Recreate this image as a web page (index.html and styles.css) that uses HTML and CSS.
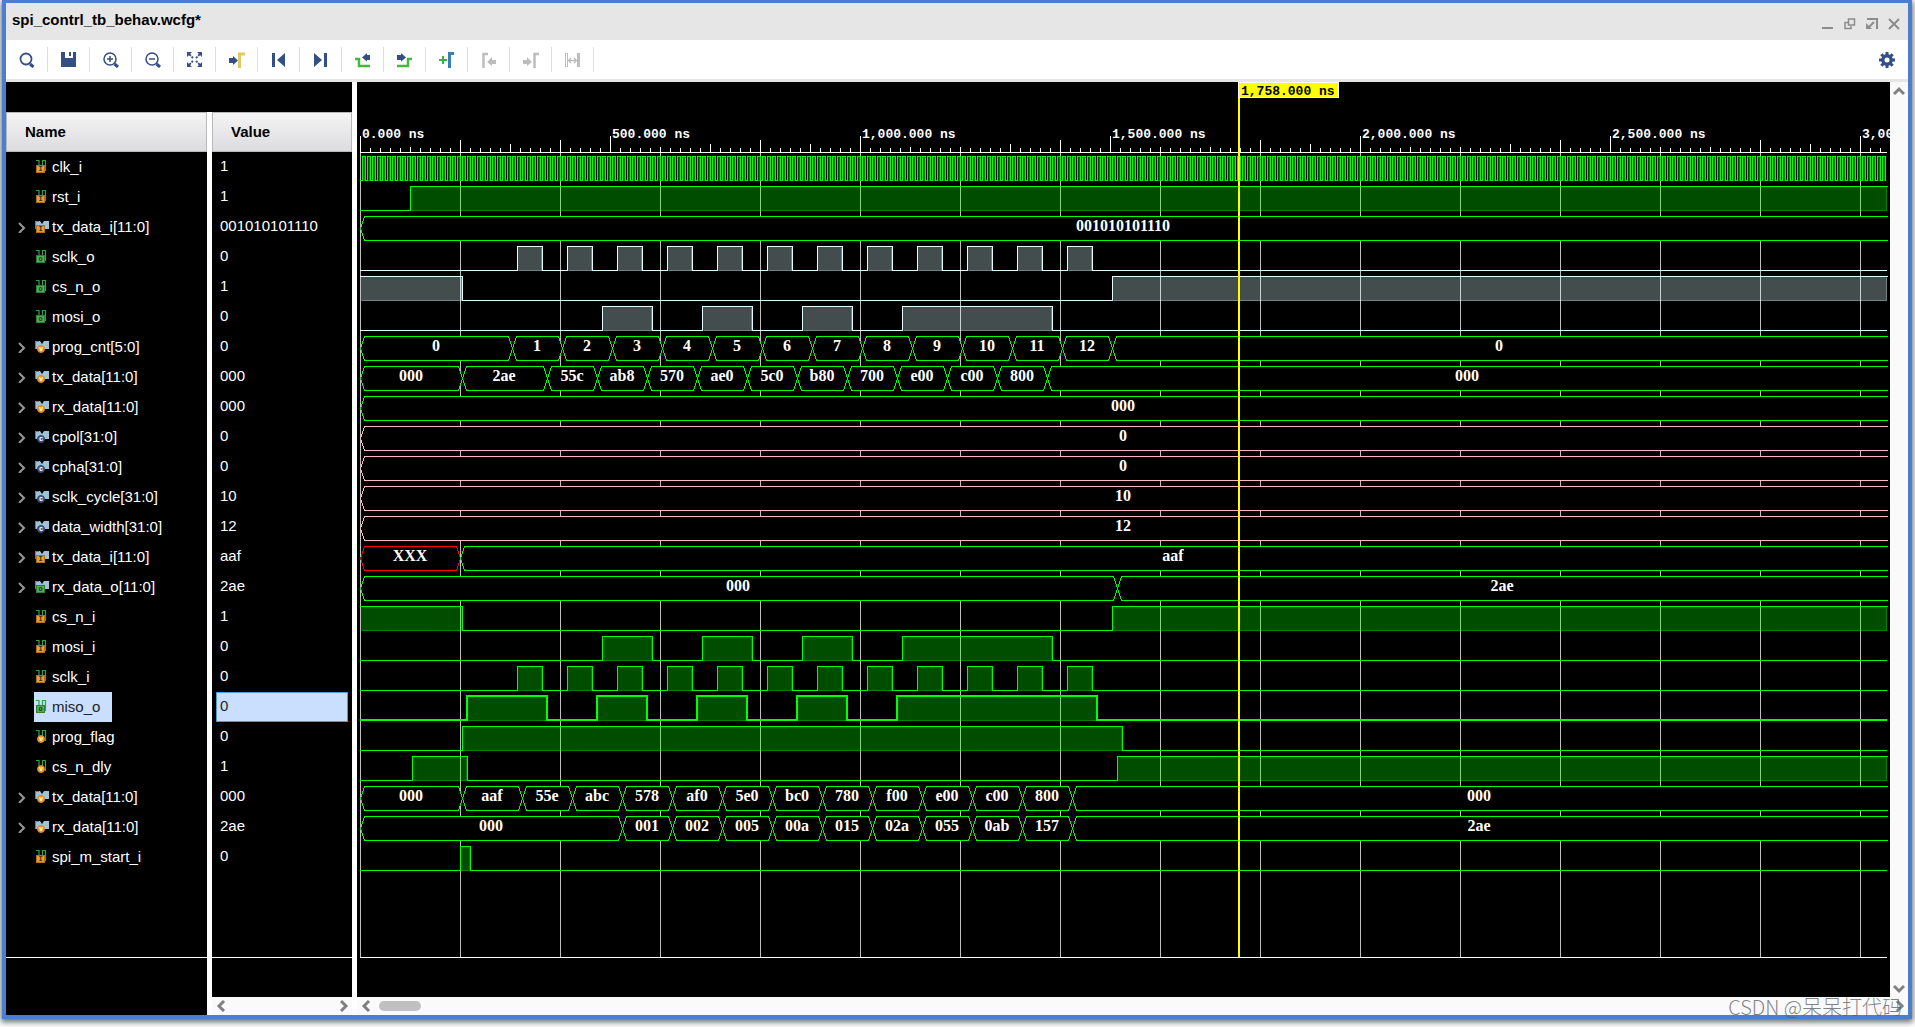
FILE: index.html
```html
<!DOCTYPE html>
<html lang="en">
<head>
  <meta charset="UTF-8" />
  <meta name="viewport" content="width=device-width, initial-scale=1.0"/>
  <title>spi_contrl_tb_behav.wcfg*</title>
  <link rel="stylesheet" href="styles.css">
</head>
<body>
  <main class="window">
    <header class="titlebar">
      <h1>spi_contrl_tb_behav.wcfg*</h1>
      <div class="window-controls">
        <button aria-label="Minimize"><svg viewBox="0 0 12 12"><path d="M0 10h11" stroke-width="2"/></svg></button>
        <button aria-label="Restore"><svg viewBox="0 0 12 12"><path d="M4.500 1h6v6h-6zM4 4.500H1v6h6V8" stroke-width="1.500"/></svg></button>
        <button aria-label="Float"><svg viewBox="0 0 12 12"><path d="M1 1h10v10M8 4L3 9" stroke-width="2"/><path d="M0 5v6h6z" fill="#8c8c8c" stroke="none"/></svg></button>
        <button aria-label="Close"><svg viewBox="0 0 12 12"><path d="M1 1l10 10M11 1L1 11" stroke-width="2"/></svg></button>
      </div>
    </header>

    <div class="toolbar">
      <button aria-label="Find"><svg viewBox="0 0 16 16"><circle cx="7" cy="7" r="5.500" fill="none" stroke="#344f86" stroke-width="1.800"/><path d="M11 12l3.500 3" stroke="#344f86" stroke-width="3"/></svg></button>
      <button aria-label="Save"><svg viewBox="0 0 16 16"><path d="M0 0h4v6h8V0h3v15H0z" fill="#344f86"/><path d="M8 0h2v4H8z" fill="#344f86"/></svg></button>
      <button aria-label="Zoom in"><svg viewBox="0 0 16 16"><circle cx="7" cy="7" r="6" fill="none" stroke="#344f86" stroke-width="1.500"/><path d="M4 7h6M7 4v6" stroke="#344f86" stroke-width="1.500"/><path d="M11.500 12l3.500 3" stroke="#344f86" stroke-width="3"/></svg></button>
      <button aria-label="Zoom out"><svg viewBox="0 0 16 16"><circle cx="7" cy="7" r="6" fill="none" stroke="#344f86" stroke-width="1.500"/><path d="M4 7h6" stroke="#344f86" stroke-width="1.500"/><path d="M11.500 12l3.500 3" stroke="#344f86" stroke-width="3"/></svg></button>
      <button aria-label="Zoom fit"><svg viewBox="0 0 16 16"><path d="M0 0h5L0 5zM10 0h5v5zM0 10v5h5zM15 10v5h-5z" fill="#344f86"/><path d="M1 1l5 5M14 1L9 6M1 14l5-5M14 14L9 9" stroke="#344f86" stroke-width="1.800" stroke-dasharray="4 1 3"/></svg></button>
      <button aria-label="Go to cursor"><svg viewBox="0 0 16 16"><path d="M0 6h4V4l5 4.500L4 13v-2H0z" fill="#344f86"/><path d="M10.500 16V2H16" fill="none" stroke="#e0c862" stroke-width="3"/></svg></button>
      <button aria-label="Go to start"><svg viewBox="0 0 16 16"><path d="M1 1h3v14H1zM14 1v14L6 8z" fill="#344f86"/></svg></button>
      <button aria-label="Go to end"><svg viewBox="0 0 16 16"><path d="M11 1h3v14h-3zM1 1v14l8-7z" fill="#344f86"/></svg></button>
      <button aria-label="Previous transition"><svg viewBox="0 0 16 16"><path d="M0 7h4v7h11" fill="none" stroke="#45b83f" stroke-width="2.500"/><path d="M15 3h-3V1L7 5.500l5 4V8h3z" fill="#344f86"/></svg></button>
      <button aria-label="Next transition"><svg viewBox="0 0 16 16"><path d="M0 14h11V7h4" fill="none" stroke="#45b83f" stroke-width="2.500"/><path d="M0 3h4V1l5 4.500-5 4V8H0z" fill="#344f86"/></svg></button>
      <button aria-label="Add marker"><svg viewBox="0 0 16 16"><path d="M0 8h8M4 4v8" stroke="#3fae46" stroke-width="2"/><path d="M10.500 16V1.500H15" fill="none" stroke="#3580b5" stroke-width="3"/></svg></button>
      <button aria-label="Previous marker" disabled><svg viewBox="0 0 16 16"><path d="M2.500 16V2H7" fill="none" stroke="#bdbdbd" stroke-width="2.500"/><path d="M15 8h-4V5L6 10l5 4v-2h4z" fill="#bdbdbd"/></svg></button>
      <button aria-label="Next marker" disabled><svg viewBox="0 0 16 16"><path d="M11.500 16V2H16" fill="none" stroke="#bdbdbd" stroke-width="2.500"/><path d="M0 8h4V5l5 5-5 4v-2H0z" fill="#bdbdbd"/></svg></button>
      <button aria-label="Swap cursors" disabled><svg viewBox="0 0 16 16"><path d="M.5 1.500h2v13h-2z" fill="none" stroke="#bdbdbd"/><path d="M12 1h3v14h-3z" fill="#bdbdbd"/><path d="M4 8.500h7M6 6L3.500 8.500 6 11M9 6l2.500 2.500L9 11" fill="none" stroke="#bdbdbd" stroke-width="1.300"/></svg></button>
      <button class="settings" aria-label="Settings"><svg viewBox="0 0 16 16"><circle cx="8" cy="8" r="4.200" fill="none" stroke="#344f86" stroke-width="3.400"/><path d="M8 0v3M8 13v3M0 8h3M13 8h3M2.300 2.300l2 2M11.700 11.700l2 2M2.300 13.700l2-2M11.700 4.300l2-2" stroke="#344f86" stroke-width="3"/></svg></button>
    </div>

    <div class="viewer">
      <section class="signals">
        <div class="name-pane">
          <table>
            <thead><tr><th>Name</th></tr></thead>
            <tbody id="names"></tbody>
          </table>
          <div class="rest"></div>
          <div class="foot"></div>
        </div>
        <div class="value-pane">
          <table>
            <thead><tr><th>Value</th></tr></thead>
            <tbody id="values"></tbody>
          </table>
          <div class="rest"></div>
          <div class="foot"></div>
          <div class="scroll-x">
            <button aria-label="Scroll values left"><svg viewBox="0 0 12 12"><path d="M9 1L4 6l5 5"/></svg></button>
            <button aria-label="Scroll values right"><svg viewBox="0 0 12 12"><path d="M4 1l5 5-5 5"/></svg></button>
          </div>
        </div>
      </section>

      <section class="waves">
        <div class="wave-row">
          <div class="wave-area" id="waveArea">
            <svg id="wave" role="img" aria-label="Waveforms"></svg>
          </div>
          <div class="scroll-y">
            <button aria-label="Scroll up"><svg viewBox="0 0 12 12"><path d="M1 9l5-5 5 5"/></svg></button>
            <button aria-label="Scroll down"><svg viewBox="0 0 12 12"><path d="M1 4l5 5 5-5"/></svg></button>
          </div>
        </div>
        <div class="scroll-x">
          <button aria-label="Scroll left"><svg viewBox="0 0 12 12"><path d="M9 1L4 6l5 5"/></svg></button>
          <div class="thumb"></div>
          <button aria-label="Scroll right"><svg viewBox="0 0 12 12"><path d="M4 1l5 5-5 5"/></svg></button>
        </div>
      </section>
    </div>
    <div class="watermark">CSDN @呆呆打代码</div>
  </main>

  <script src="script.js"></script>
</body>
</html>
```
FILE: styles.css
```css
* {
  box-sizing: border-box;
}

body {
  margin: 0;
  height: 100vh;
  padding: 0 3px 8px 2px;
  background: white;
  font-family: "Liberation Sans", Arial, sans-serif;
  font-size: 15px;
  overflow: hidden;
}

button {
  display: flex;
  align-items: center;
  justify-content: center;
  padding: 0;
  border: none;
  background: none;
  cursor: pointer;
}

.window {
  position: relative;
  display: flex;
  flex-direction: column;
  height: 100%;
  border: 4px solid #4a7fd0;
  border-top-width: 3px;
  background: white;
  box-shadow: 0 2px 6px 1px rgba(0, 0, 0, 0.6);
}

/* title bar */
.titlebar {
  display: flex;
  justify-content: space-between;
  height: 37px;
  padding: 0 3px 0 6px;
  background: #e6e6e6;
}

.titlebar h1 {
  margin: 0;
  font-size: 15px;
  line-height: 33px;
}

.window-controls {
  display: flex;
  padding-top: 5px;
}

.window-controls button {
  width: 22px;
}

.window-controls svg {
  width: 12px;
  height: 12px;
  fill: none;
  stroke: #8c8c8c;
}

/* toolbar */
.toolbar {
  display: flex;
  align-items: center;
  height: 42px;
  border-bottom: 3px solid #e6e6e6;
}

.toolbar button {
  width: 42px;
  height: 25px;
  border-right: 1px solid #dcdcdc;
}

.toolbar svg {
  width: 16px;
  height: 16px;
}

.toolbar .settings {
  margin-left: auto;
  border-right: none;
}

/* signal list */
.viewer {
  display: flex;
  flex: 1;
  gap: 5px;
  min-height: 0;
}

.signals {
  display: flex;
  gap: 5px;
  border-top: 30px solid black;
}

.name-pane, .value-pane {
  display: flex;
  flex-direction: column;
  background: black;
}

.name-pane {
  width: 201px;
}

.value-pane {
  width: 140px;
}

table {
  width: 100%;
  border-collapse: separate;
  border-spacing: 0;
  color: white;
}

th {
  height: 40px;
  padding: 0 18px 2px;
  border: 1px solid #b8b8b8;
  background: linear-gradient(#f4f4f4, #dcdcdf);
  color: black;
  text-align: left;
}

td {
  height: 30px;
  padding: 0;
}

.signal {
  display: flex;
  align-items: center;
  height: 30px;
  padding-left: 10px;
}

.arrow {
  width: 18px;
  height: 12px;
  padding-right: 8px;
}

.arrow svg {
  width: 10px;
  height: 12px;
  fill: none;
  stroke: #999;
  stroke-width: 2;
}

.name {
  display: flex;
  align-items: center;
  gap: 3px;
  height: 30px;
  padding: 0 12px 2px 1px;
}

.name svg {
  width: 14px;
  height: 16px;
}

.badge {
  font: bold 7px "Liberation Mono", monospace;
  text-anchor: middle;
  fill: #333;
}

.badge.light {
  fill: white;
}

.value {
  height: 30px;
  margin: 0 4px;
  padding: 0 3px;
  border: 1px solid transparent;
  line-height: 26px;
}

.selected .name {
  background: #cadefd;
  color: #222;
}

.selected .value {
  border-color: #4a9be0;
  background: #cadefd;
  color: #222;
}

.rest {
  flex: 1;
  border-bottom: 1px solid white;
}

.foot {
  height: 39px;
}

.name-pane .foot {
  height: 57px;
}

/* waveforms */
.waves {
  display: flex;
  flex: 1;
  flex-direction: column;
  min-width: 0;
}

.wave-row {
  display: flex;
  flex: 1;
  min-height: 0;
}

.wave-area {
  flex: 1;
  min-width: 0;
  padding-left: 3px;
  background: black;
  overflow: hidden;
}

.wave-area svg {
  display: block;
  width: 100%;
  height: 100%;
}

.wave-area path, .wave-area line, .wave-area rect {
  shape-rendering: crispEdges;
}

.wave-area text {
  fill: white;
  font: bold 16px "Liberation Serif", serif;
}

.wave-area .label {
  text-anchor: middle;
}

.wave-area .time {
  font: bold 13px "Liberation Mono", monospace;
}

.wave-area .cursor-time {
  fill: black;
}

.scroll-y, .scroll-x {
  display: flex;
  background: #fafafa;
}

.scroll-y {
  flex-direction: column;
  justify-content: space-between;
  width: 18px;
}

.scroll-x {
  height: 18px;
}

.scroll-x button, .scroll-y button {
  width: 18px;
  height: 18px;
}

.scroll-x button:last-child {
  margin-left: auto;
}

.scroll-x svg, .scroll-y svg {
  width: 12px;
  height: 12px;
  fill: none;
  stroke: #808080;
  stroke-width: 3;
}

.thumb {
  width: 42px;
  height: 10px;
  margin: 4px;
  border-radius: 5px;
  background: #c0c0c0;
}

.watermark {
  position: absolute;
  right: 6px;
  bottom: -6px;
  color: rgba(90, 90, 90, 0.75);
  font-family: "Noto Sans CJK SC", sans-serif;
  font-size: 20px;
  font-weight: 300;
  line-height: 28px;
}
```
FILE: script.js
```js
const GREEN = '#00ff00';
const CYAN = '#e0ffff';
const PINK = '#ffb6c1';

// signal type icons
const shapes = {
  scalar: '<path d="M1 2.5h3V10M7.5 10V2.5h3V13" fill="none" stroke="#35a049" stroke-width="1.2"/>',
  bus: '<path d="M0 3h5l2 3 2-3h5v8H0z" fill="#9cc4d6"/><path d="M.5 11V3.500H4" fill="none" stroke="#60808e"/>'
};

const badges = {
  i: '<rect x="1.500" y="7.500" width="8" height="7" fill="#f39a23" stroke="#b56f14"/><text x="5.500" y="13" class="badge">I</text>',
  o: '<rect x="1.500" y="7.500" width="8" height="7" fill="#4caf50" stroke="#2f7f38"/><text x="5.500" y="13" class="badge">o</text>',
  v: '<circle cx="6" cy="11" r="3.500" fill="#f39a23" stroke="#d9851a"/><text x="6" y="13" class="badge light">v</text>',
  c: '<circle cx="6" cy="11" r="3.500" fill="#3d5a92" stroke="#33476f"/><text x="6" y="13" class="badge light">c</text>'
};

// positions are in pixels from 0 ns, 1 px = 2 ns
const sclk = [];
for (let i = 0; i < 12; i++) sclk.push([157 + i * 50, 182 + i * 50]);

const clk = [];
for (let x = 2; x < 3000; x += 5) clk.push([x, x + 3]);

const csn = [[0, 102], [752, Infinity]];
const mosi = [[242, 292], [342, 392], [442, 492], [542, 692]];

// values that follow each other every 50 px
function steps(start, values) {
  return values.map((v, i) => [start + i * 50, v]);
}

const signals = [
  { name: 'clk_i', value: '1', type: 'i', high: clk },
  { name: 'rst_i', value: '1', type: 'i', high: [[50, Infinity]] },
  { name: 'tx_data_i[11:0]', value: '001010101110', type: 'i', bus: [[0, '001010101110']] },
  { name: 'sclk_o', value: '0', type: 'o', color: CYAN, high: sclk },
  { name: 'cs_n_o', value: '1', type: 'o', color: CYAN, high: csn },
  { name: 'mosi_o', value: '0', type: 'o', color: CYAN, high: mosi },
  { name: 'prog_cnt[5:0]', value: '0', type: 'v', bus: [[0, '0'], ...steps(152, ['1', '2', '3', '4', '5', '6', '7', '8', '9', '10', '11', '12', '0'])] },
  { name: 'tx_data[11:0]', value: '000', type: 'v', bus: [[0, '000'], [102, '2ae'], ...steps(187, ['55c', 'ab8', '570', 'ae0', '5c0', 'b80', '700', 'e00', 'c00', '800', '000'])] },
  { name: 'rx_data[11:0]', value: '000', type: 'v', bus: [[0, '000']] },
  { name: 'cpol[31:0]', value: '0', type: 'c', color: PINK, bus: [[0, '0']] },
  { name: 'cpha[31:0]', value: '0', type: 'c', color: PINK, bus: [[0, '0']] },
  { name: 'sclk_cycle[31:0]', value: '10', type: 'c', color: PINK, bus: [[0, '10']] },
  { name: 'data_width[31:0]', value: '12', type: 'c', color: PINK, bus: [[0, '12']] },
  { name: 'tx_data_i[11:0]', value: 'aaf', type: 'i', bus: [[0, 'XXX'], [100, 'aaf']] },
  { name: 'rx_data_o[11:0]', value: '2ae', type: 'o', bus: [[0, '000'], [757, '2ae']] },
  { name: 'cs_n_i', value: '1', type: 'i', high: csn },
  { name: 'mosi_i', value: '0', type: 'i', high: mosi },
  { name: 'sclk_i', value: '0', type: 'i', high: sclk },
  { name: 'miso_o', value: '0', type: 'o', selected: true, high: [[107, 187], [237, 287], [337, 387], [437, 487], [537, 737]] },
  { name: 'prog_flag', value: '0', type: 'v', high: [[102, 762]] },
  { name: 'cs_n_dly', value: '1', type: 'v', high: [[52, 107], [757, Infinity]] },
  { name: 'tx_data[11:0]', value: '000', type: 'v', bus: [[0, '000'], [102, 'aaf'], ...steps(162, ['55e', 'abc', '578', 'af0', '5e0', 'bc0', '780', 'f00', 'e00', 'c00', '800', '000'])] },
  { name: 'rx_data[11:0]', value: '2ae', type: 'v', bus: [[0, '000'], ...steps(262, ['001', '002', '005', '00a', '015', '02a', '055', '0ab', '157', '2ae'])] },
  { name: 'spi_m_start_i', value: '0', type: 'i', high: [[100, 110]] }
];

const RULER = 70;
const ROW = 30;

function fillTables() {
  let names = '';
  let values = '';
  signals.forEach(s => {
    const cls = s.selected ? ' class="selected"' : '';
    const arrow = s.bus
      ? `<button class="arrow" aria-label="Expand ${s.name}"><svg viewBox="0 0 10 12"><path d="M3 2l5 5-5 5"/></svg></button>`
      : '<span class="arrow"></span>';
    const icon = (s.bus ? shapes.bus : shapes.scalar) + badges[s.type];
    names += `<tr${cls}><td><div class="signal">${arrow}<span class="name"><svg viewBox="0 0 14 16" aria-hidden="true">${icon}</svg>${s.name}</span></div></td></tr>`;
    values += `<tr${cls}><td><div class="value">${s.value}</div></td></tr>`;
  });
  document.getElementById('names').innerHTML = names;
  document.getElementById('values').innerHTML = values;
}

function drawLevel(s, y, end) {
  const color = s.color || GREEN;
  const off = s.selected ? 0 : 0.5;
  const hi = y + 4 + off;
  const lo = y + 28 + off;
  let out = '';
  let d = `M${s.selected ? -1 : 0} ${lo}`;
  s.high.forEach(([from, to]) => {
    if (from >= end) return;
    const a = from + off;
    const b = Math.min(to, end) + off;
    out += `<rect x="${from + 1.5}" y="${y + 5.5}" width="${b - a - 2}" height="23" fill="${color}" fill-opacity="0.3" stroke="${color}" stroke-opacity="0.3"/>`;
    if (from === 0) d = `M0 ${hi}`;
    else d += `H${a}V${hi}`;
    d += `H${b}`;
    if (to < end) d += `V${lo}`;
  });
  const last = s.high[s.high.length - 1];
  if (last[1] < end) d += `H${end}`;
  return out + `<path d="${d}" fill="none" stroke="${color}" stroke-width="${s.selected ? 2 : 1}"/>`;
}

function drawBus(s, y, end) {
  const hi = y + 4.5;
  const lo = y + 28.5;
  const mid = y + 16.5;
  let out = '';
  s.bus.forEach(([from, text], i) => {
    const last = i === s.bus.length - 1;
    const to = last ? end : s.bus[i + 1][0];
    const color = text === 'XXX' ? '#ff0000' : s.color || GREEN;
    const a = from + 0.5;
    const b = to + 0.5;
    const d = last
      ? `M${b} ${hi}H${a + 4}L${a} ${mid}L${a + 4} ${lo}H${b}`
      : `M${a} ${mid}L${a + 4} ${hi}H${b - 4}L${b} ${mid}L${b - 4} ${lo}H${a + 4}Z`;
    out += `<path d="${d}" fill="black" stroke="${color}"/>`;
    out += `<text class="label" x="${Math.floor((from + to) / 2)}" y="${y + 19}">${text}</text>`;
  });
  return out;
}

function drawRuler(end) {
  let out = '';
  for (let x = 0; x < end; x += 10) {
    let h = 4;
    if (x % 250 === 0) h = 16;
    else if (x % 100 === 0) h = 12;
    else if (x % 50 === 0) h = 8;
    out += `<line x1="${x + 0.5}" x2="${x + 0.5}" y1="${RULER - h}" y2="${RULER}" stroke="white"/>`;
  }
  for (let x = 0; x < end; x += 250) {
    const label = (x * 2).toLocaleString('en-US', { minimumFractionDigits: 3 }) + ' ns';
    out += `<rect x="${x + 1}" y="${RULER - 28}" width="${label.length * 8 + 5}" height="23" fill="black"/>`;
    out += `<text class="time" x="${x + 2}" y="${RULER - 14}">${label}</text>`;
  }
  return out + `<line x1="0" x2="${end}" y1="${RULER + 0.5}" y2="${RULER + 0.5}" stroke="white"/>`;
}

function drawWave() {
  const area = document.getElementById('waveArea');
  const end = area.clientWidth - 6;
  const bottom = area.clientHeight - 40;
  let out = '';

  for (let x = 0; x < end; x += 100) {
    out += `<line x1="${x + 0.5}" x2="${x + 0.5}" y1="${RULER}" y2="${bottom}" stroke="#c0c0c0"/>`;
  }
  out += drawRuler(end);
  signals.forEach((s, i) => {
    const y = RULER + i * ROW;
    out += s.bus ? drawBus(s, y, end) : drawLevel(s, y, end);
  });
  out += `<line x1="0" x2="${end}" y1="${bottom + 0.5}" y2="${bottom + 0.5}" stroke="white"/>`;

  // cursor
  const c = 1758 / 2;
  out += `<line x1="${c}" x2="${c}" y1="16" y2="${bottom}" stroke="yellow" stroke-width="2"/>`;
  out += `<rect x="${c - 0.5}" y="0.5" width="100" height="15" fill="yellow" stroke="white"/>`;
  out += `<text class="time cursor-time" x="${c + 2}" y="13">1,758.000 ns</text>`;

  document.getElementById('wave').innerHTML = out;
}

fillTables();
drawWave();
window.addEventListener('resize', drawWave);
```
